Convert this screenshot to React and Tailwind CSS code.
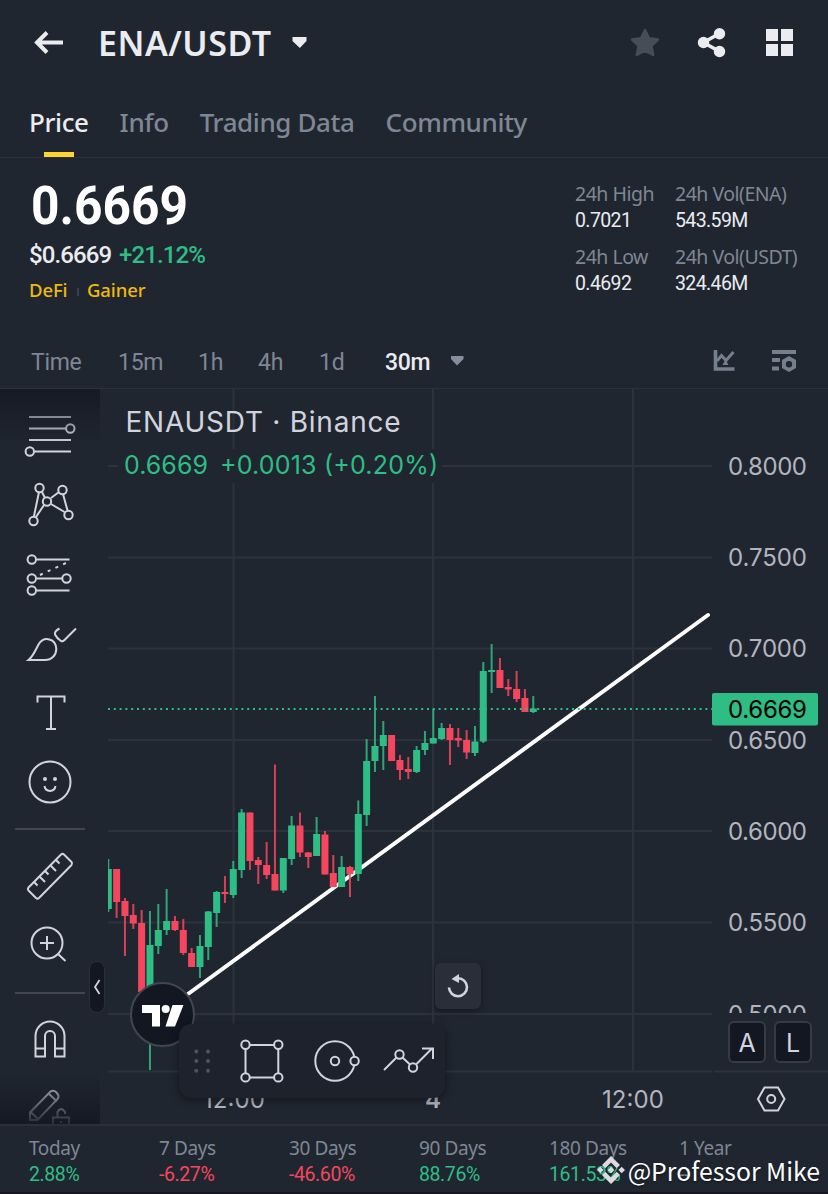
import { useState } from "react";

const UP = "#2ebd85";
const DOWN = "#f6465d";

const tabs = ["Price", "Info", "Trading Data", "Community"];

const stats = [
  { label: "24h High", value: "0.7021" },
  { label: "24h Vol(ENA)", value: "543.59M" },
  { label: "24h Low", value: "0.4692" },
  { label: "24h Vol(USDT)", value: "324.46M" },
];

const intervals = [
  { name: "Time", width: "w-[87px]" },
  { name: "15m", width: "w-20" },
  { name: "1h", width: "w-[60px]" },
  { name: "4h", width: "w-[61px]" },
  { name: "1d", width: "w-[66px]" },
  { name: "30m", width: "w-[65px]" },
];

const periods = [
  { label: "Today", value: "2.88%" },
  { label: "7 Days", value: "-6.27%" },
  { label: "30 Days", value: "-46.60%" },
  { label: "90 Days", value: "88.76%" },
  { label: "180 Days", value: "161.53%" },
  { label: "1 Year", value: "--" },
];

const priceTicks = [
  { label: "0.8000", y: 466 },
  { label: "0.7500", y: 557.5 },
  { label: "0.7000", y: 648.5 },
  { label: "0.6500", y: 740 },
  { label: "0.6000", y: 831 },
  { label: "0.5500", y: 922.5 },
  { label: "0.5000", y: 1014 },
];

// [direction, wick top, body top, body bottom, wick bottom]
const candles = [
  [1, 859, 869, 909, 912],
  [0, 869, 869, 902, 918],
  [0, 898, 901, 916, 956],
  [0, 904, 915, 923.5, 929],
  [0, 910, 923, 992, 992],
  [1, 911, 945, 990, 1070],
  [1, 904, 930, 946, 954],
  [1, 889, 921, 930, 935],
  [0, 916, 921, 930, 931],
  [0, 919, 930, 953, 955],
  [0, 948, 953, 967, 967],
  [1, 935, 946, 967, 978],
  [1, 911, 911.5, 947, 960],
  [1, 891, 892, 913, 927],
  [0, 876, 892, 894, 903],
  [1, 861, 869, 895, 898],
  [1, 809, 812.5, 870, 878],
  [0, 812.5, 812.5, 861, 870],
  [0, 857, 860, 865, 884],
  [0, 842, 865, 875, 879],
  [0, 764.5, 874, 890.5, 890.5],
  [1, 858, 858, 890.5, 893],
  [1, 816, 825.5, 859, 865],
  [0, 812.5, 825.5, 852.5, 857],
  [0, 852, 852.5, 857, 868],
  [1, 817, 834, 856, 856],
  [0, 831, 834.5, 874.5, 874.5],
  [0, 855, 873, 887, 887],
  [1, 856, 867, 887, 887],
  [0, 866, 867, 874, 897],
  [1, 800.5, 814, 874, 881],
  [1, 739, 761, 815, 826],
  [1, 696, 746, 761, 772],
  [1, 721, 735, 746, 770],
  [0, 735, 735, 761, 761],
  [0, 755, 760, 770, 780],
  [0, 757, 769, 772, 779],
  [1, 746, 750, 772, 773],
  [1, 731, 743, 750, 755],
  [1, 709, 738, 743.5, 743.5],
  [1, 723, 728, 739, 740],
  [0, 724, 728, 740, 765],
  [0, 728, 738, 740.5, 747],
  [0, 730, 740, 752.5, 759],
  [1, 726, 741.5, 753, 756],
  [1, 662, 671, 741.5, 743],
  [1, 644, 670, 672, 693],
  [0, 658, 670, 688, 688],
  [0, 679, 687, 689.5, 696],
  [0, 671, 689, 699, 702],
  [0, 689, 698, 712, 712],
  [1, 696, 708.5, 712, 713],
];

function Header() {
  return (
    <header className="flex h-[85px] items-center pr-[35px] pl-[34px]">
      <svg className="h-6 w-[30px]" viewBox="0 0 30 24" fill="none" stroke="#eaecef" strokeWidth="4">
        <path d="M29 11.5H3M13 1.5L3 11.5l10 10" />
      </svg>
      <h1 className="ml-[34px] w-[178px] text-[34px] leading-[40px] font-semibold tracking-[0.5px] whitespace-nowrap text-[#eaecef]">
        ENA/USDT
      </h1>
      <svg className="ml-[16px] h-3 w-[15px]" viewBox="0 0 15 12" fill="#eaecef">
        <path d="M1 0h13.5v4L7.8 11 0.5 4V0z" />
      </svg>
      <div className="ml-auto flex items-center">
        <svg className="h-8 w-8" viewBox="0 0 32 32" fill="#474d57" stroke="#474d57" strokeWidth="2.5" strokeLinejoin="round">
          <path d="M16 3l4 8.300 9 1.200-6.600 6.300 1.800 9.200-8.200-4.400L7.800 28l1.800-9.200L3 12.500l9-1.200z" />
        </svg>
        <svg className="ml-[35px] h-8 w-8" viewBox="0 0 32 32" fill="#eaecef">
          <path d="M23.5 6.500L7.5 15.500l16 9" fill="none" stroke="#eaecef" strokeWidth="3.6" />
          <circle cx="23.5" cy="6.8" r="5.7" />
          <circle cx="7.5" cy="15.5" r="5.7" />
          <circle cx="23.5" cy="24.5" r="5.7" />
        </svg>
        <svg className="ml-[38px] h-[27px] w-[27px]" viewBox="0 0 27 27" fill="#eaecef">
          <path d="M0 0h12v12H0zM15 0h12v12H15zM0 15h12v12H0zM15 15h12v12H15z" />
        </svg>
      </div>
    </header>
  );
}

function PriceSummary() {
  return (
    <section className="flex h-[176px] justify-between pl-[29px]">
      <div className="pt-[18px]">
        <p className="ml-[2px] origin-left scale-x-[0.92] font-['Roboto'] text-[54px] leading-[60px] font-bold whitespace-nowrap text-white">
          0.6669
        </p>
        <p className="mt-1 flex gap-2 font-['Roboto'] text-2xl leading-[30px] font-medium tracking-[-0.9px] whitespace-nowrap">
          <span className="w-[82px] text-[#eaecef]">$0.6669</span>
          <span className="text-[#2ebd85]">+21.12%</span>
        </p>
        <div className="mt-[8px] flex items-center text-[18.5px] leading-6 font-medium tracking-[-0.1px] text-[#f0b90b]">
          <span className="w-[39px]">DeFi</span>
          <span className="mt-1 mr-2 ml-[9px] h-2 w-[2px] bg-[#3a404a]" />
          <span>Gainer</span>
        </div>
      </div>
      <dl className="grid w-[253px] grid-cols-[100px_1fr] content-start gap-y-[9px] pt-[23px]">
        {stats.map((s) => (
          <div key={s.label} className="whitespace-nowrap">
            <dt className="text-[19.5px] leading-[26px] tracking-[-0.5px] text-[#7f8794]">{s.label}</dt>
            <dd className="font-['Roboto'] text-[19.5px] leading-[28px] tracking-[-0.6px] text-[#eaecef]">
              {s.value}
            </dd>
          </div>
        ))}
      </dl>
    </section>
  );
}

function IntervalBar() {
  return (
    <nav className="flex h-[55px] items-center border-b border-[#2b313a] pl-[31px] font-['Roboto'] text-[23px] tracking-[-0.3px] text-[#7f8794]">
      {intervals.map((it) => (
        <button
          key={it.name}
          className={`${it.width} pt-[4px] text-left ${it.name === "30m" ? "font-medium text-[#eaecef]" : ""}`}
        >
          {it.name}
        </button>
      ))}
      <svg className="mb-[1px] h-[10px] w-[14px]" viewBox="0 0 14 10" fill="#848e9c">
        <path d="M1 0h12.5v3L7 9.500 1 3z" />
      </svg>
      <svg className="ml-auto h-6 w-6" viewBox="0 0 24 24" fill="#767f8d">
        <path d="M3.5 1v19H22.500" fill="none" stroke="#767f8d" strokeWidth="3.6" />
        <path d="M5 12l4.500-5.500 4.500 5L21.500 3" fill="none" stroke="#767f8d" strokeWidth="3" />
        <path d="M13.5 10.500l3 5.500h-6z" />
      </svg>
      <svg className="mr-[31px] ml-[35px] h-6 w-[26px]" viewBox="0 0 26 24" fill="#767f8d">
        <path d="M1 1h24v4H1zM1 9h8v4H1zM1 17.500h7v4H1z" />
        <path fillRule="evenodd" d="M18 7l7 4v8l-7 4-7-4v-8zM18 12a3.200 3.200 0 100 6.400 3.200 3.200 0 000-6.400z" />
      </svg>
    </nav>
  );
}

function Tool({ y, h, children }) {
  return (
    <svg
      className="block w-full shrink-0"
      height={h}
      viewBox={`0 ${y} 100 ${h}`}
      fill="none"
      stroke="#d1d4dc"
      strokeWidth="2"
    >
      {children}
    </svg>
  );
}

function DrawingTools() {
  return (
    <aside className="relative flex w-[100px] flex-col overflow-hidden">
      <Tool y={389} h={82}>
        <path d="M29 417h42M29 428.500h37M29 440h42M34.500 451.500H71" />
        <circle cx="70.3" cy="428.5" r="4.2" />
        <circle cx="29.8" cy="451.5" r="4.2" />
      </Tool>
      <Tool y={471} h={70}>
        <path d="M38.900 492.500l-5 24M42 492l3 6M51 498l8-6M63 494l4.500 16.500M51 504l13.500 8M44 505l-8 12" />
        <circle cx="39.5" cy="488" r="4.2" />
        <circle cx="62.5" cy="490" r="4.2" />
        <circle cx="47" cy="501.5" r="4.2" />
        <circle cx="68.5" cy="515" r="4.2" />
        <circle cx="33.5" cy="521" r="4.2" />
      </Tool>
      <Tool y={541} h={70}>
        <path d="M36.500 559.500H69.500M36.500 578.500H62M36.500 590.500H69.500" />
        <path d="M40 575l27-12.500" strokeDasharray="3 5.5" />
        <circle cx="31.8" cy="559.5" r="4.2" />
        <circle cx="31.8" cy="578.5" r="4.2" />
        <circle cx="66.5" cy="578.5" r="4.2" />
        <circle cx="31.8" cy="590.5" r="4.2" />
      </Tool>
      <Tool y={611} h={68}>
        <path d="M28.500 660c5-4 7.500-11 10-15.500 5.500-9 17.500-6 17.800 4.500 0 6-4.500 11-11.300 11z" />
        <path d="M59.500 628.500c-3 1.500-5 3.500-4.500 6 1 2 3.500 5 6 6.500 1.500.7 2.500 0 3.500-1l11.500-11.500" />
      </Tool>
      <Tool y={679} h={70}>
        <path d="M37.500 702.500v-6h27v6M51 696.500v32.500M46 729h10" />
      </Tool>
      <Tool y={749} h={79}>
        <circle cx="50" cy="782" r="20.5" />
        <circle cx="45" cy="779" r="2" fill="#d1d4dc" stroke="none" />
        <circle cx="55" cy="779" r="2" fill="#d1d4dc" stroke="none" />
        <path d="M44.500 786c1 6.500 10 6.500 11 0" />
      </Tool>
      <hr className="mx-auto w-[70px] border-t-2 border-[#434651]" />
      <Tool y={830} h={81}>
        <path d="M28.500 887.500L61 854.500q1.500-1.300 3 0L71.500 862q1.300 1.500 0 3L39 898q-1.500 1.300-3 0l-7.500-7.500q-1.300-1.500 0-3z" />
        <path d="M34 882l3.500 3.500M39.500 876.500l5.500 5.500M45 871l3.500 3.500M50.500 865.500l5.500 5.500M56 860l3.500 3.500" />
      </Tool>
      <Tool y={911} h={81}>
        <circle cx="47" cy="943" r="15.5" />
        <path d="M47 936v14M40 943h14M58 954l7.500 7" />
      </Tool>
      <hr className="mx-auto w-[70px] border-t-2 border-[#434651]" />
      <Tool y={994} h={81}>
        <path d="M35.500 1056.500v-20.500a14.500 14.500 0 0129 0v20.500h-9.500v-20.500a5 5 0 00-10 0v20.500zM35.500 1048.500h9.500M55 1048.500h9.500" />
      </Tool>
      <Tool y={1075} h={50}>
        <g stroke="#c4c7cf">
          <path d="M30 1120v-7.500l20.500-21q3-2 6 1t1.500 6l-20.500 21.500zM31 1112.500l7.500 7M48.500 1093.500l8.500 8" />
          <path d="M57.500 1118v-6q3.500-6 7.500 0v2M53 1126v-8.500h16v8.500M61 1121v2" />
        </g>
      </Tool>
      {/* scroll shadows */}
      <div className="pointer-events-none absolute inset-x-0 top-0 h-14 bg-linear-to-b from-[#131722cc] to-transparent" />
      <div className="pointer-events-none absolute inset-x-0 bottom-0 h-[52px] bg-linear-to-t from-[#131722e0] to-transparent" />
    </aside>
  );
}

function Chart() {
  return (
    <svg
      className="block h-[735px] w-[728px] font-['Inter']"
      viewBox="100 389 728 735"
      fontSize="24"
      fill="#b2b5be"
    >
      <g stroke="#2c323c" strokeWidth="2">
        {priceTicks.map((t) => (
          <line key={t.label} x1="108" x2="712" y1={t.y} y2={t.y} />
        ))}
        <path d="M233.500 389v682M433 389v682M633 389v682" />
        <path d="M108 1071.500h604M714 1071.500h114" />
      </g>
      <rect x="118" y="449" width="324" height="34" fill="#202630" />

      <text x="125.5" y="432" fontSize="28" fill="#d1d4dc" textLength="275">
        ENAUSDT · Binance
      </text>
      <text x="124" y="474" fontSize="25" fill={UP} textLength="84">
        0.6669
      </text>
      <text x="220" y="474" fontSize="25" fill={UP} textLength="218">
        +0.0013 (+0.20%)
      </text>

      {priceTicks.slice(0, 6).map((t) => (
        <text key={t.label} x="728" y={t.y + 8.5} textLength="79">
          {t.label}
        </text>
      ))}
      <svg x="712" y="1000" width="116" height="13" viewBox="712 1000 116 13">
        <text x="728" y="1022.5" textLength="79">
          0.5000
        </text>
      </svg>

      <path d="M188 994L708 615" stroke="#fff" strokeWidth="4" strokeLinecap="round" />
      {candles.map(([up, top, open, close, low], i) => {
        const x = 108.3 + i * 8.333;
        const left = i === 0 ? 108 : x - 3.5;
        return (
          <g key={i} fill={up ? UP : DOWN}>
            <rect x={i === 0 ? 108 : x - 1} y={top} width={i === 0 ? 1.3 : 2} height={low - top} opacity="0.85" />
            <rect x={left} y={open} width={x + 3.5 - left} height={close - open} />
          </g>
        );
      })}

      <path d="M108 709H712" stroke={UP} strokeWidth="2" strokeDasharray="2 3.8" />
      <rect x="712" y="693" width="106" height="32.5" rx="2" fill={UP} />
      <text x="728" y="717.5" fill="#000" textLength="79">
        0.6669
      </text>

      <text x="203" y="1108" textLength="62">12:00</text>
      <text x="425" y="1108" fontWeight="600">4</text>
      <text x="602" y="1108" textLength="62">12:00</text>
      <g fill="none" stroke="#d1d4dc" strokeWidth="2">
        <path d="M764.500 1087.500h13.500l6.500 11.500-6.500 11.500h-13.500l-6.500-11.500z" />
        <circle cx="771.2" cy="1099" r="4" />
      </g>
    </svg>
  );
}

function ShapeToolbar() {
  return (
    <div className="absolute top-[635px] left-[179px] h-[74px] w-[266px] rounded-xl bg-[#1e222d] shadow-[0_2px_10px_rgba(0,0,0,0.45)]">
      <svg className="h-full w-full" viewBox="179 1024 266 74" fill="none" stroke="#d1d4dc" strokeWidth="2">
        <g fill="#50535e" stroke="none">
          {[1051.5, 1061, 1070.7].map((y) => (
            <g key={y}>
              <circle cx="196.3" cy={y} r="2" />
              <circle cx="208" cy={y} r="2" />
            </g>
          ))}
        </g>
        <path d="M250 1045h24M278.300 1049v24M274 1077.500h-24M245.500 1073v-24" />
        <circle cx="245.5" cy="1044.7" r="4.2" />
        <circle cx="278.3" cy="1044.7" r="4.2" />
        <circle cx="245.5" cy="1077.4" r="4.2" />
        <circle cx="278.3" cy="1077.4" r="4.2" />
        <circle cx="335" cy="1061" r="19.7" />
        <circle cx="335" cy="1061" r="4.2" />
        <circle cx="354.6" cy="1061" r="4.2" fill="#1e222d" />
        <path d="M384 1070l12.500-12.500M402.500 1057.500l7.500 7M416 1064.500l16-16M422 1048.500h11v10.500" />
        <circle cx="399.5" cy="1054.5" r="4.2" />
        <circle cx="413" cy="1067.5" r="4.2" />
      </svg>
    </div>
  );
}

function ChartArea() {
  return (
    <section className="relative flex h-[737px] border-b-2 border-[#2a2f39]">
      <DrawingTools />
      <Chart />

      <button className="absolute top-[572px] left-[89px] flex h-[52px] w-4 items-center justify-center rounded-lg border border-[#2a2e39] bg-[#131722]">
        <svg className="h-4 w-2" viewBox="0 0 8 16" fill="none" stroke="#d1d4dc" strokeWidth="1.8">
          <path d="M6.500 1L2 8l4.500 7" />
        </svg>
      </button>

      <div className="absolute top-[593px] left-[130px] flex h-[65px] w-[65px] items-center justify-center rounded-full border-2 border-[#434651] bg-[#131722]">
        <svg className="mt-[2px] h-[22px] w-[42px]" viewBox="0 0 42 22" fill="#fff">
          <path d="M0 0h18v21.500H10V8H0zM30.500 0H41.500L33 21.500H23.500z" />
          <circle cx="23.7" cy="4" r="4" />
        </svg>
      </div>

      <button className="absolute top-[574px] left-[435px] flex h-[46px] w-[46px] items-center justify-center rounded-md bg-[#2a2e39] shadow-[0_2px_6px_rgba(0,0,0,0.4)]">
        <svg className="h-6 w-6" viewBox="0 0 24 24" fill="none" stroke="#d1d4dc" strokeWidth="2.6">
          <path d="M3 13.500a9 9 0 109-9.300H9.500" />
          <path d="M13 0v9L5.500 5z" fill="#d1d4dc" stroke="none" />
        </svg>
      </button>

      <div className="absolute top-[632px] left-[728px] flex gap-2 font-['Inter'] text-[25px] text-[#d1d4dc]">
        <button className="flex h-[42px] w-[38px] items-center justify-center rounded-md border-2 border-[#363a45] bg-[#131722] pt-[3px]">
          A
        </button>
        <button className="flex h-[42px] w-[38px] items-center justify-center rounded-md border-2 border-[#363a45] bg-[#131722] pt-[3px]">
          L
        </button>
      </div>

      <ShapeToolbar />
    </section>
  );
}

function Performance() {
  return (
    <footer className="relative grid h-[68px] grid-cols-[repeat(5,130px)_1fr] border-b-2 border-[#191422] pt-[9px] pl-[29px]">
      {periods.map((p) => (
        <div key={p.label} className="whitespace-nowrap">
          <p className="text-[19px] leading-[26px] tracking-[-0.4px] text-[#7f8794]">{p.label}</p>
          <p
            className={`font-['Roboto'] text-[19.5px] leading-[28px] tracking-[-0.4px] ${
              p.value.startsWith("--")
                ? "text-[#7f8794]"
                : p.value.startsWith("-")
                  ? "text-[#f6465d]"
                  : "text-[#2ebd85]"
            }`}
          >
            {p.value}
          </p>
        </div>
      ))}
      <div className="absolute top-[27px] right-[8px] flex items-center gap-[3px] font-['Noto_Sans_CJK_SC',sans-serif] text-[24.8px] leading-[34px] font-normal whitespace-nowrap text-white [text-shadow:0_1px_2px_rgba(0,0,0,0.5)]">
        <svg className="h-7 w-7" viewBox="0 0 28 28" fill="#dadcdf">
          <path d="M14 0l9 9-3.300 3.300L14 6.600l-5.700 5.700L5 9zM14 28l9-9-3.300-3.300-5.700 5.700-5.700-5.700L5 19zM14 10.700l3.300 3.300-3.300 3.300-3.300-3.300zM3.300 10.700L6.600 14l-3.300 3.300L0 14zM24.700 10.700L28 14l-3.300 3.300-3.300-3.300z" />
        </svg>
        @Professor Mike
      </div>
    </footer>
  );
}

export default function App() {
  const [tab, setTab] = useState("Price");

  return (
    <div className="h-[1194px] w-[828px] overflow-hidden bg-[#202630] font-['Noto_Sans',sans-serif]">
      <Header />
      <nav className="flex h-[73px] gap-[31px] border-b border-[#2b313a] pl-[29px]">
        {tabs.map((name) => (
          <button
            key={name}
            onClick={() => setTab(name)}
            className={`flex h-full flex-col items-center text-[26px] leading-[36px] font-medium tracking-[-0.4px] whitespace-nowrap ${
              tab === name ? "text-[#eaecef]" : "text-[#7f8794]"
            }`}
          >
            <span className="mt-[19px]">{name}</span>
            {tab === name && <span className="mt-auto h-[5px] w-[30px] bg-[#fcd535]" />}
          </button>
        ))}
      </nav>
      <PriceSummary />
      <IntervalBar />
      <ChartArea />
      <Performance />
    </div>
  );
}
